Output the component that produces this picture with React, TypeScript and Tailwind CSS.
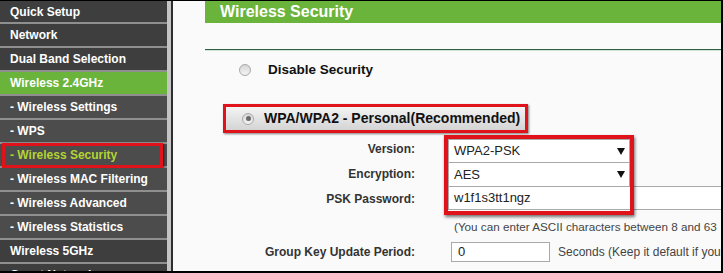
import React from "react";

const items: { label: string; kind: "top" | "sub" | "green" | "active" }[] = [
  { label: "Quick Setup", kind: "top" },
  { label: "Network", kind: "top" },
  { label: "Dual Band Selection", kind: "top" },
  { label: "Wireless 2.4GHz", kind: "green" },
  { label: "- Wireless Settings", kind: "sub" },
  { label: "- WPS", kind: "sub" },
  { label: "- Wireless Security", kind: "active" },
  { label: "- Wireless MAC Filtering", kind: "sub" },
  { label: "- Wireless Advanced", kind: "sub" },
  { label: "- Wireless Statistics", kind: "sub" },
  { label: "Wireless 5GHz", kind: "top" },
  { label: "Guest Network", kind: "top" },
];

function Radio({ checked }: { checked?: boolean }) {
  return (
    <span className="flex h-[12px] w-[12px] items-center justify-center rounded-full border border-[#a8a8a8] bg-gradient-to-b from-[#d6d6d6] to-[#f4f4f4]">
      {checked && <span className="h-[5px] w-[5px] rounded-full bg-[#6a6a6a]" />}
    </span>
  );
}

function Arrow() {
  return (
    <svg width="8" height="7" viewBox="0 0 8 7" className="mr-[4px]">
      <path d="M0 0 L8 0 L4 7 Z" fill="#111" />
    </svg>
  );
}

export default function App() {
  return (
    <div
      className="flex h-[273px] w-[723px] overflow-hidden border-t border-r-2 border-b-2 border-black bg-[#fafafa]"
      style={{ fontFamily: '"Liberation Sans", Arial, sans-serif' }}
    >
      {/* Sidebar */}
      <div className="flex w-[173px] shrink-0">
        <div className="flex w-[167px] flex-col gap-[2px] bg-[#8f8f8f]">
          {items.map((it, i) => {
            const bg =
              it.kind === "green"
                ? "bg-[#6ab43c]"
                : it.kind === "top"
                ? "bg-[#3e3e3e]"
                : "bg-[#4c4c4c]";
            const color = it.kind === "active" ? "text-[#b2d433]" : "text-white";
            return (
              <div
                key={it.label}
                className={`relative flex shrink-0 items-center pl-[10px] text-[12px] font-bold ${bg} ${color} ${
                  i === 0 ? "h-[21px]" : "h-[22px]"
                }`}
              >
                {it.label}
                {it.kind === "active" && (
                  <div className="pointer-events-none absolute -top-[1px] left-[2px] h-[25px] w-[161px] border-[3px] border-[#e0131a] shadow-[1px_1px_2px_rgba(0,0,0,0.6)]" />
                )}
              </div>
            );
          })}
        </div>
        <div className="w-[4px] bg-[#c4c4c4]" />
        <div className="w-[2px] bg-[#2e2e2e]" />
      </div>

      {/* Content */}
      <div className="flex min-w-0 flex-1 flex-col">
        <div className="ml-[32px] flex h-[22px] items-center bg-[#6ab43c] pl-[15px] text-[16px] font-bold text-white">
          Wireless Security
        </div>
        <div className="ml-[32px] mt-[26px] h-[1px] bg-[#2f5e42]" />
        <div className="ml-[32px] h-[1px] bg-[#cfe6d6]" />

        <div className="mt-[9px] flex h-[20px] items-center">
          <span className="ml-[66px]">
            <Radio />
          </span>
          <span className="ml-[17px] text-[13.5px] font-bold text-[#111]">Disable Security</span>
        </div>

        <div className="ml-[50px] mt-[24px] flex h-[29px] w-[305px] items-center border-[3px] border-[#e0131a] bg-gradient-to-b from-[#f4f4f4] to-[#d4d4d4] shadow-[1px_1px_2px_rgba(0,0,0,0.5)]">
          <span className="ml-[16px]">
            <Radio checked />
          </span>
          <span className="ml-[10px] text-[14px] font-bold text-[#111]">
            WPA/WPA2 - Personal(Recommended)
          </span>
        </div>

        <div className="mt-[2px] flex h-[80px]">
          <div className="flex w-[242px] shrink-0 flex-col pt-[1px] text-right text-[12px] font-bold text-[#333]">
            <div className="flex h-[25px] items-center justify-end">Version:</div>
            <div className="flex h-[25px] items-center justify-end">Encryption:</div>
            <div className="flex h-[25px] items-center justify-end">PSK Password:</div>
          </div>
          <div className="relative ml-[29px] h-[80px] w-[190px] shrink-0">
            <div className="absolute left-[4px] top-[4px] flex w-[182px] flex-col text-[13px] text-[#222]">
              <div className="flex h-[24px] items-center justify-between border border-[#a9a9a9] bg-white pl-[5px]">
                <span>WPA2-PSK</span>
                <Arrow />
              </div>
              <div className="-mt-px flex h-[25px] items-center justify-between border border-[#a9a9a9] bg-white pl-[5px]">
                <span>AES</span>
                <Arrow />
              </div>
              <div className="-mt-px flex h-[24px] w-[320px] items-center border border-[#a9a9a9] bg-white pl-[5px]">
                w1f1s3tt1ngz
              </div>
            </div>
            <div className="pointer-events-none absolute inset-0 border-4 border-[#e0131a] shadow-[1px_2px_3px_rgba(0,0,0,0.55)]" />
          </div>
        </div>

        <div className="ml-[281px] mt-[3px] flex h-[18px] items-center whitespace-nowrap text-[11.7px] text-[#444]">
          (You can enter ASCII characters between 8 and 63
        </div>

        <div className="mt-[6px] flex h-[20px] items-center whitespace-nowrap">
          <div className="w-[242px] shrink-0 text-right text-[12px] font-bold text-[#333]">
            Group Key Update Period:
          </div>
          <div className="ml-[36px] flex h-[20px] w-[99px] shrink-0 items-center border border-[#a9a9a9] bg-white pl-[6px] text-[13px] text-[#222]">
            0
          </div>
          <span className="ml-[8px] text-[12px] text-[#444]">Seconds (Keep it default if you</span>
        </div>
      </div>
    </div>
  );
}
